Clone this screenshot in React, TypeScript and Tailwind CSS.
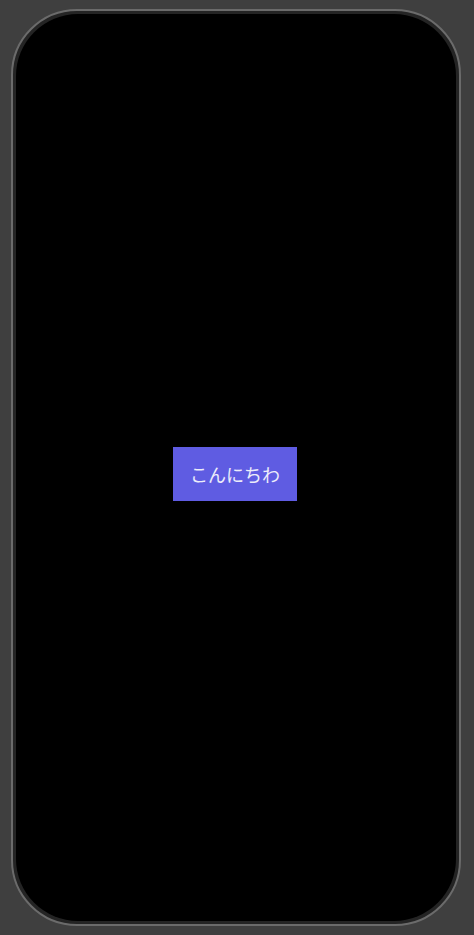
import React from 'react';

const App: React.FC = () => {
  return (
    <div className="w-[474px] h-[935px] bg-[#3f3f3f] pt-[9px] pl-[11px] overflow-hidden">
      <div className="w-[450px] h-[917px] rounded-[66px] border-2 border-[#6b6b6b] bg-[#242424] p-[3px]">
        <div className="w-full h-full rounded-[62px] bg-black flex items-center justify-center pt-[13px] pr-[2px]">
          <button
            className="w-[124px] h-[54px] bg-[#5f5ce2] text-[#ececfa] text-[18px] flex items-center justify-center"
            style={{ fontFamily: '"Noto Sans CJK JP", "Noto Sans", sans-serif' }}
          >
            こんにちわ
          </button>
        </div>
      </div>
    </div>
  );
};

export default App;
